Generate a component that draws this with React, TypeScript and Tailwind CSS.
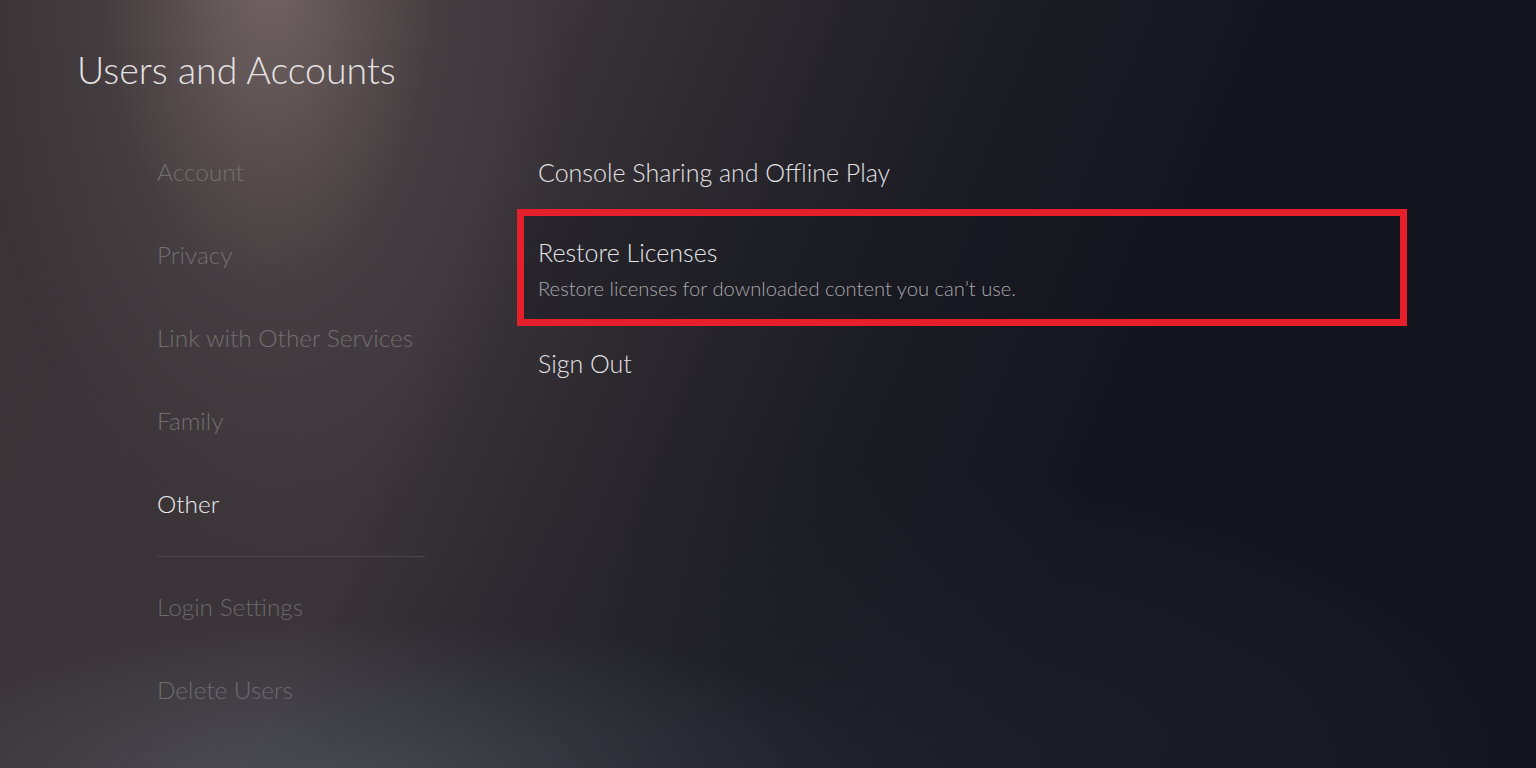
import React from "react";

const leftItems = [
  { label: "Account", active: false },
  { label: "Privacy", active: false },
  { label: "Link with Other Services", active: false },
  { label: "Family", active: false },
  { label: "Other", active: true },
];

export default function App() {
  return (
    <div
      className="relative w-full h-[768px] overflow-hidden bg-[#14151e]"
      style={{ fontFamily: "Lato, 'Open Sans', sans-serif" }}
    >
      <div className="absolute inset-0 bg-[linear-gradient(112deg,#393336_0%,#3b3539_30%,#2b282e_42%,#1b1b24_56%,#14151f_70%,#13141d_100%)]" />
      <div className="absolute inset-0 bg-[radial-gradient(ellipse_300px_600px_at_270px_-40px,rgba(175,150,145,0.5),rgba(120,105,105,0.18)_55%,transparent_100%)]" />
      <div className="absolute inset-0 bg-[radial-gradient(ellipse_520px_170px_at_380px_790px,rgba(95,105,115,0.55),transparent_100%)]" />
      <div className="absolute inset-0 bg-[radial-gradient(ellipse_700px_300px_at_900px_768px,rgba(40,40,50,0.5),transparent_100%)]" />

      <div className="relative flex flex-col">
        <h1 className="pl-[77px] pt-[46px] h-[131px] text-[37.5px] leading-[48px] text-[#e6e2e2] font-light">
          Users and Accounts
        </h1>

        <div className="flex">
          <div className="flex flex-col w-[360px] ml-[157px]">
            {leftItems.map((it) => (
              <div
                key={it.label}
                className={`h-[83px] flex items-center text-[24.4px] font-light ${
                  it.active ? "text-[#ececee]" : "text-[#726e71]"
                }`}
              >
                {it.label}
              </div>
            ))}
            <div className="mt-[10px] h-px w-[268px] bg-[#4a474e]" />
            <div className="mt-[9px] h-[83px] flex items-center text-[24.4px] font-light text-[#69686d]">
              Login Settings
            </div>
            <div className="h-[83px] flex items-center text-[24.4px] font-light text-[#6b6c71]">
              Delete Users
            </div>
          </div>

          <div className="flex flex-col w-[890px]">
            <div className="mt-[7px] h-[70px] flex items-center pl-[21px] text-[25px] font-light text-[#e2e1e4]">
              Console Sharing and Offline Play
            </div>
            <div className="mt-px h-[117px] border-[7px] border-[#e5202b] bg-[#15161f]/40 pl-[14px] pt-[22px]">
              <div className="text-[25px] leading-[28px] font-light text-[#e4e4e7]">Restore Licenses</div>
              <div className="mt-[11px] text-[20.2px] leading-[22px] font-light text-[#a8a8ad]">
                Restore licenses for downloaded content you can’t use.
              </div>
            </div>
            <div className="h-[76px] flex items-center pl-[21px] text-[25px] font-light text-[#e2e1e4]">
              Sign Out
            </div>
          </div>
        </div>
      </div>
    </div>
  );
}
